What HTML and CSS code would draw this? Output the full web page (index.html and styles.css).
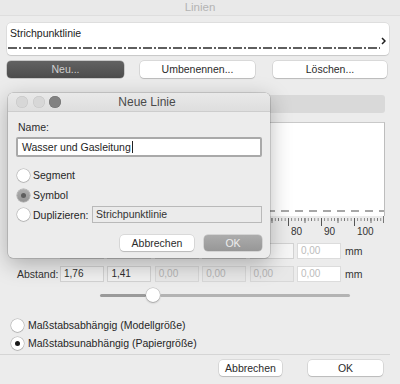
FILE: index.html
```html
<!DOCTYPE html>
<html lang="de">
<head>
<meta charset="utf-8">
<title>Linien</title>
<link rel="stylesheet" href="styles.css">
</head>
<body>
<div class="window">
  <div class="titlebar">Linien</div>

  <div class="listbox">
    <div class="list-main">
      <div class="list-name">Strichpunktlinie</div>
      <svg class="dashdot" width="372" height="2" viewBox="0 0 372 2"><line x1="0" y1="1" x2="372" y2="1" stroke="#2a2a2a" stroke-width="1.4" stroke-dasharray="9 2 2 2"/></svg>
    </div>
    <svg class="chevron" width="5" height="8" viewBox="0 0 5 8"><polyline points="1,1 4,4 1,7" fill="none" stroke="#1e1e1e" stroke-width="1.5"/></svg>
  </div>

  <div class="btnrow">
    <div class="btn dark">Neu...</div>
    <div class="btn">Umbenennen...</div>
    <div class="btn">Löschen...</div>
  </div>

  <div class="segbar"></div>

  <div class="preview">
    <svg class="dashes" width="369" height="2" viewBox="0 0 369 2"><line x1="0" y1="1" x2="369" y2="1" stroke="#8a8a8a" stroke-width="1.5" stroke-dasharray="8 6"/></svg>
  </div>

  <svg class="ruler" width="370" height="26" viewBox="0 0 370 26">
    <defs>
      <pattern id="minor" x="9" y="0" width="3.3" height="26" patternUnits="userSpaceOnUse">
        <rect x="0" y="2" width="0.8" height="3" fill="#707070"/>
      </pattern>
      <pattern id="mid" x="25.5" y="0" width="33" height="26" patternUnits="userSpaceOnUse">
        <rect x="0" y="2" width="0.9" height="5" fill="#606060"/>
      </pattern>
      <pattern id="major" x="9" y="0" width="33" height="26" patternUnits="userSpaceOnUse">
        <rect x="0" y="2" width="1" height="8" fill="#555"/>
      </pattern>
    </defs>
    <rect x="9" y="0" width="360" height="26" fill="url(#minor)"/>
    <rect x="9" y="0" width="360" height="26" fill="url(#mid)"/>
    <rect x="9" y="0" width="360" height="26" fill="url(#major)"/>
    <rect x="368" y="0" width="1" height="7" fill="#777"/>
    <text x="276" y="19" class="rtext">80</text>
    <text x="309" y="19" class="rtext">90</text>
    <text x="342" y="19" class="rtext">100</text>
  </svg>

  <div class="row">
    <div class="row-label"></div>
    <div class="fields">
      <div class="field"></div>
      <div class="field"></div>
      <div class="field"></div>
      <div class="field"></div>
      <div class="field light"></div>
      <div class="field white">0,00</div>
    </div>
    <div class="unit">mm</div>
  </div>

  <div class="row row2">
    <div class="row-label">Abstand:</div>
    <div class="fields">
      <div class="field">1,76</div>
      <div class="field">1,41</div>
      <div class="field dim">0,00</div>
      <div class="field dim">0,00</div>
      <div class="field dim">0,00</div>
      <div class="field white">0,00</div>
    </div>
    <div class="unit">mm</div>
  </div>

  <div class="slider">
    <div class="track left"></div>
    <div class="knob"></div>
    <div class="track right"></div>
  </div>

  <div class="radios">
    <div class="radio"><span class="circle"></span><span class="rlabel">Maßstabsabhängig (Modellgröße)</span></div>
    <div class="radio"><span class="circle on"></span><span class="rlabel">Maßstabsunabhängig (Papiergröße)</span></div>
  </div>

  <div class="sep"></div>

  <div class="footer">
    <div class="btn cancel">Abbrechen</div>
    <div class="btn ok">OK</div>
  </div>

  <div class="dialog">
    <div class="dtitle">
      <div class="lights">
        <span class="light-dot"></span>
        <span class="light-dot"></span>
        <span class="light-dot dark"></span>
      </div>
      <div class="dtitle-text">Neue Linie</div>
    </div>
    <div class="dbody">
      <div class="dlabel">Name:</div>
      <div class="namefield">Wasser und Gasleitung<span class="caret"></span></div>
      <div class="dradio first"><span class="circle"></span><span class="rlabel">Segment</span></div>
      <div class="dradio"><span class="circle sel"></span><span class="rlabel">Symbol</span></div>
      <div class="dradio dup"><span class="circle"></span><span class="rlabel duplabel">Duplizieren:</span><div class="dupfield">Strichpunktlinie</div></div>
      <div class="dbuttons">
        <div class="btn dcancel">Abbrechen</div>
        <div class="btn dok">OK</div>
      </div>
    </div>
  </div>
</div>
</body>
</html>
```

FILE: styles.css
```css
* { box-sizing: border-box; }
html, body { margin: 0; padding: 0; }
body {
  width: 400px;
  height: 384px;
  overflow: hidden;
  background: #ececec;
  font-family: "Liberation Sans", Arial, sans-serif;
  font-size: 10.5px;
  color: #262626;
}
.window {
  position: relative;
  width: 400px;
  height: 384px;
  background: #ececec;
}
.titlebar {
  height: 16px;
  line-height: 15px;
  text-align: center;
  font-size: 11.5px;
  color: #b4b4b4;
  background: #e9e9e9;
  border-bottom: 1px solid #dedede;
}
.listbox {
  margin: 7px 0 0 7px;
  width: 382px;
  height: 32px;
  background: #fff;
  border-radius: 4px;
  box-shadow: 0 0 0 0.5px rgba(0,0,0,0.12), 0 1px 1px rgba(0,0,0,0.1);
  display: flex;
  align-items: center;
  padding: 0 3px 0 1px;
}
.list-main {
  flex: 1;
  display: flex;
  flex-direction: column;
  align-self: flex-start;
}
.list-name {
  padding: 4px 0 0 2px;
  height: 16px;
  line-height: 12px;
  font-size: 10.5px;
  color: #222;
}
.dashdot { display: block; margin-top: 8px; }
.chevron { display: block; margin-top: 3px; }

.btnrow {
  margin: 6px 0 0 7px;
  display: grid;
  grid-template-columns: 117px 115px 116px;
  column-gap: 16px;
  height: 17px;
}
.btnrow .btn:last-child { margin-left: 2px; }
.btn {
  height: 17px;
  line-height: 17px;
  text-align: center;
  background: #fff;
  border-radius: 4px;
  box-shadow: 0 0 0 0.5px rgba(0,0,0,0.16), 0 1px 1px rgba(0,0,0,0.14);
  font-size: 10.5px;
  color: #2b2b2b;
}
.btn.dark {
  background: linear-gradient(#626262, #4c4c4c);
  color: #cfcfcf;
  box-shadow: 0 0 0 0.5px rgba(0,0,0,0.3);
}

.segbar {
  margin: 17px 0 0 15px;
  width: 370px;
  height: 18px;
  background: #d9d9d9;
  border-radius: 3px;
}
.preview {
  margin: 9px 0 0 15px;
  width: 370px;
  height: 94px;
  background: #fff;
  border-top: 1px solid #c9c9c9;
  border-right: 1px solid #bdbdbd;
  padding-top: 87px;
}
.dashes { display: block; }
.ruler { display: block; margin-left: 15px; }
.rtext { font-family: "Liberation Sans", Arial, sans-serif; font-size: 10px; fill: #333; }

.row {
  margin-top: 1px;
  height: 16px;
  display: flex;
  align-items: center;
  padding-left: 17px;
}
.row2 { margin-top: 7px; }
.row-label { width: 43px; font-size: 10.5px; color: #333; }
.fields {
  display: grid;
  grid-template-columns: repeat(6, 44px);
  column-gap: 3.4px;
}
.field {
  height: 16px;
  line-height: 14px;
  padding-left: 3px;
  border: 1px solid #d2d2d2;
  background: #f1f1f1;
  font-size: 10px;
  color: #2e2e2e;
}
.field.dim { background: #e8e8e8; color: #b5b5b5; border-color: #d8d8d8; }
.field.light { background: #f6f6f6; }
.field.white { background: #fff; color: #bcbcbc; border-color: #dcdcdc; }
.unit { margin-left: 4px; font-size: 10.5px; color: #333; }

.slider {
  margin: 6px 0 0 100px;
  width: 250px;
  height: 14px;
  display: flex;
  align-items: center;
}
.track { height: 3px; border-radius: 2px; }
.track.left { width: 46px; background: #9a9a9a; }
.track.right { flex: 1; background: #b3b3b3; }
.knob {
  width: 14px;
  height: 14px;
  border-radius: 50%;
  background: #fff;
  box-shadow: 0 0 0 0.5px rgba(0,0,0,0.2), 0 1px 2px rgba(0,0,0,0.25);
}

.radios { margin-top: 16px; padding-left: 11px; }
.radio {
  display: flex;
  align-items: center;
  height: 14px;
  margin-bottom: 4px;
}
.circle {
  width: 13px;
  height: 13px;
  border-radius: 50%;
  background: #fff;
  box-shadow: 0 0 0 0.5px rgba(0,0,0,0.25), 0 1px 1px rgba(0,0,0,0.12);
  display: flex;
  align-items: center;
  justify-content: center;
  flex: none;
}
.circle.on::after {
  content: "";
  width: 5px;
  height: 5px;
  border-radius: 50%;
  background: #1a1a1a;
}
.rlabel { margin-left: 4px; font-size: 10.5px; color: #262626; }

.sep {
  margin-top: 3px;
  width: 390px;
  height: 1px;
  background: #d5d5d5;
}
.footer {
  margin-top: 5px;
  display: flex;
  justify-content: flex-end;
  padding-right: 17px;
  gap: 26px;
}
.footer .btn { height: 16px; line-height: 16px; }
.cancel { width: 63px; }
.ok { width: 75px; }

/* Dialog sheet over the window */
.dialog {
  position: absolute;
  left: 8px;
  top: 93px;
  width: 262px;
  height: 165px;
  background: #ececec;
  border-radius: 5px;
  box-shadow: 0 0 0 0.5px rgba(0,0,0,0.25), 0 6px 22px rgba(0,0,0,0.28);
  overflow: hidden;
}
.dtitle {
  height: 19px;
  background: linear-gradient(#e9e9e9, #dedede);
  border-bottom: 1px solid #cdcdcd;
  display: flex;
  align-items: center;
  position: relative;
}
.lights {
  display: flex;
  gap: 4.5px;
  padding-left: 8px;
}
.light-dot {
  width: 12px;
  height: 12px;
  border-radius: 50%;
  background: #d7d7d7;
  box-shadow: inset 0 0 0 0.5px #c4c4c4;
}
.light-dot.dark { background: #828282; box-shadow: inset 0 0 0 0.5px #707070; }
.dtitle-text {
  flex: 1;
  text-align: center;
  margin-left: -37px;
  font-size: 12px;
  color: #4a4a4a;
}
.dbody { padding: 9px 8px 0 8px; }
.dlabel {
  padding-left: 2px;
  height: 12px;
  line-height: 12px;
  font-size: 10.5px;
  color: #2b2b2b;
}
.namefield {
  margin-top: 4px;
  height: 20px;
  background: #fff;
  border: 2px solid #a9a9a9;
  border-radius: 2px;
  padding-left: 4px;
  line-height: 16px;
  font-size: 10.5px;
  color: #1e1e1e;
  display: flex;
  align-items: center;
}
.caret {
  display: inline-block;
  width: 1px;
  height: 12px;
  background: #222;
  margin-left: 1px;
}
.dradio {
  display: flex;
  align-items: center;
  height: 14px;
  margin-top: 6px;
  padding-left: 1px;
}
.dradio.first { margin-top: 11px; }
.dradio .rlabel { margin-left: 3px; }
.circle.sel {
  background: linear-gradient(#b0b0b0, #939393);
  box-shadow: 0 0 0 0.5px rgba(0,0,0,0.3);
}
.circle.sel::after {
  content: "";
  width: 5px;
  height: 5px;
  border-radius: 50%;
  background: #5e5e5e;
}
.dradio.dup { height: 17px; margin-top: 4px; }
.duplabel { width: 59px; }
.dupfield {
  flex: 1;
  height: 17px;
  line-height: 15px;
  border: 1px solid #b9b9b9;
  background: #ebebeb;
  padding-left: 3px;
  font-size: 10.5px;
  color: #333;
}
.dbuttons {
  margin-top: 12px;
  display: flex;
  justify-content: flex-end;
  gap: 10px;
}
.dbuttons .btn { height: 16px; line-height: 16px; }
.dcancel { width: 74px; }
.dok {
  width: 58px;
  background: linear-gradient(#acacac, #979797);
  color: #ededed;
  box-shadow: 0 0 0 0.5px rgba(0,0,0,0.2);
}
```
